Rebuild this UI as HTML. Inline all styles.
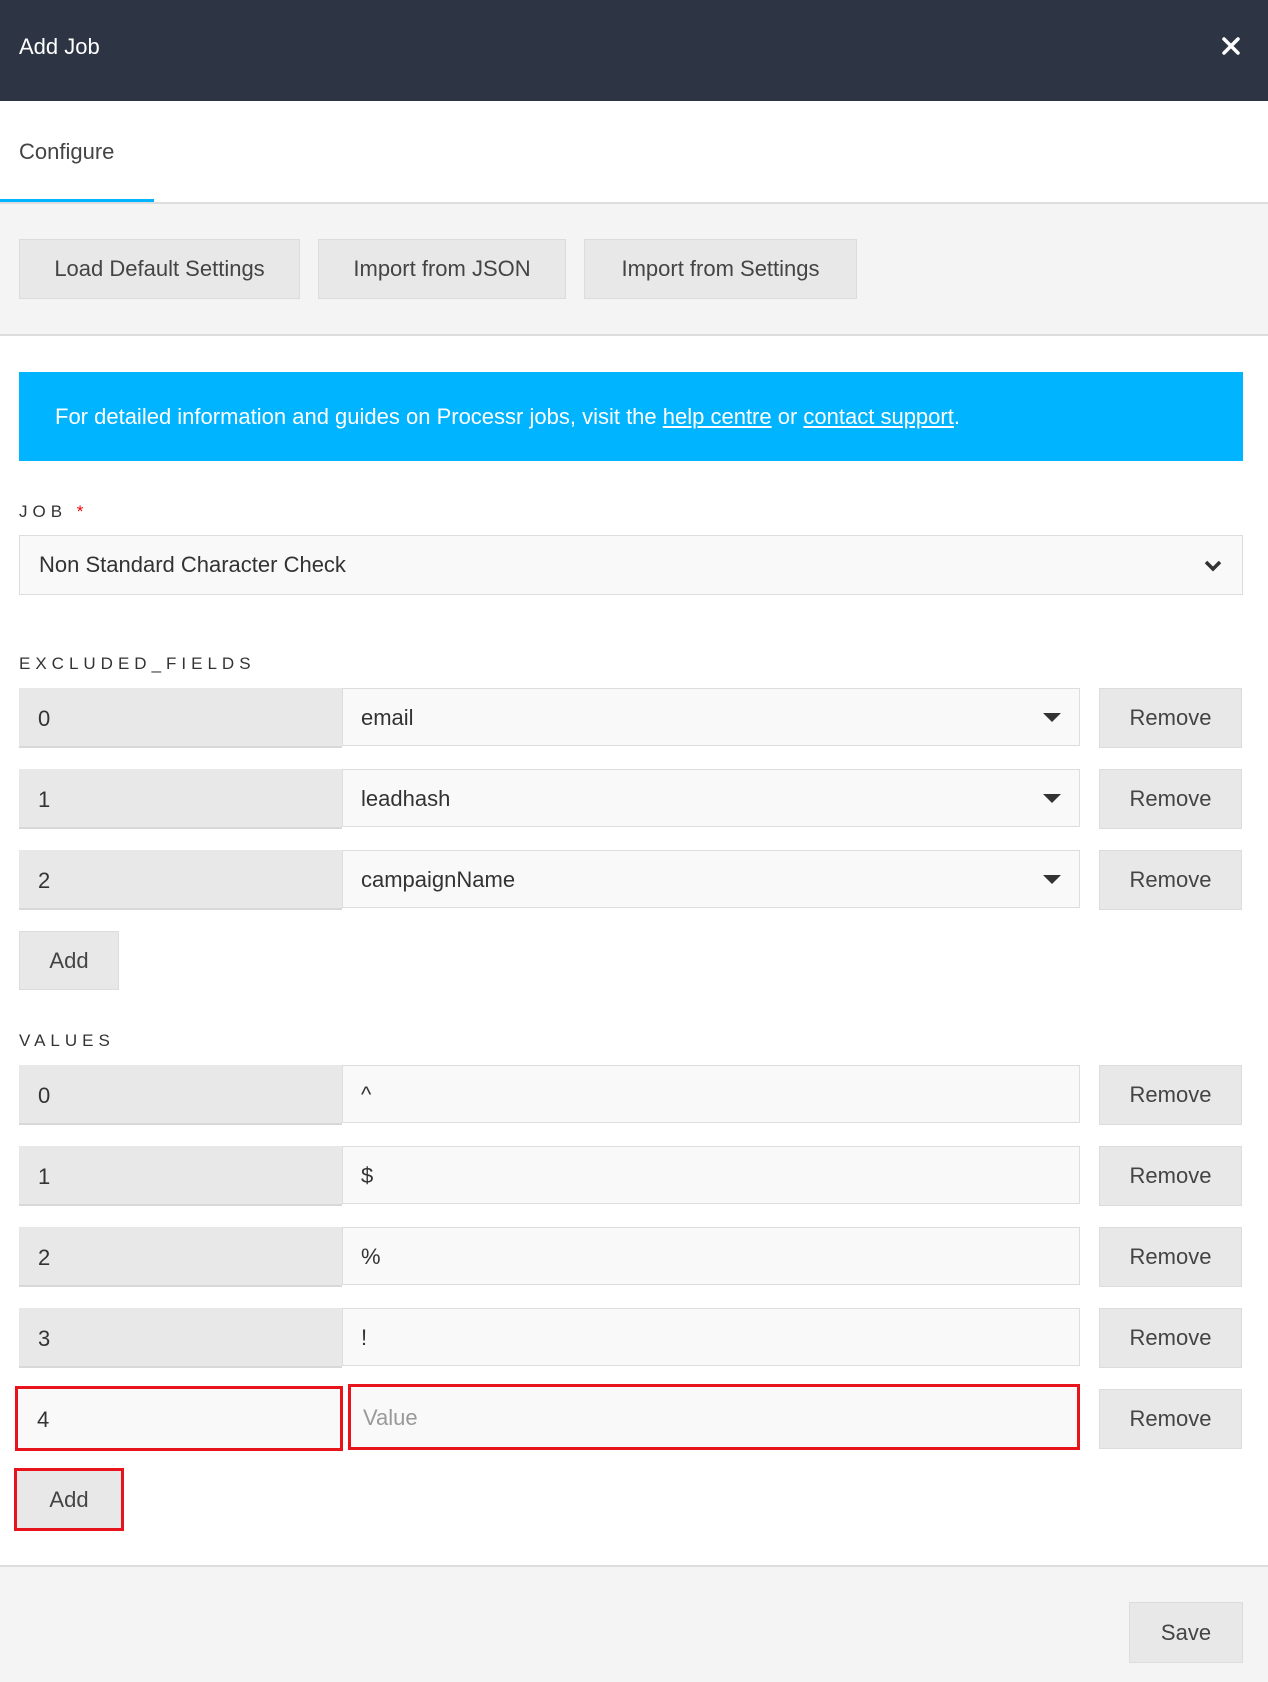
<!DOCTYPE html>
<html><head><meta charset="utf-8"><style>
*{box-sizing:border-box;margin:0;padding:0}
body{width:1268px;height:1682px;overflow:hidden;background:#fff;font-family:"Liberation Sans",sans-serif;color:#333;position:relative}
.a{position:absolute}
.hdr{left:0;top:0;width:1268px;height:101px;background:#2d3544;color:#fff}
.btn{background:#e8e8e8;border:1px solid #dcdcdc;color:#444;font-size:22px;display:flex;align-items:center;justify-content:center}
.lbl{font-size:17px;letter-spacing:5px;color:#333}
.idx{left:19px;width:323px;height:60px;background:#e8e8e8;border-bottom:2px solid #d8d8d8;font-size:22px;padding-left:19px;padding-top:3px;display:flex;align-items:center}
.fld{left:342px;width:738px;height:58px;background:#f9f9f9;border:1px solid #ddd;font-size:22px;padding-left:18px;padding-top:2px;display:flex;align-items:center}
.rm{left:1099px;width:143px;height:60px}
.car{right:18px;top:24px;width:0;height:0;border-left:9px solid transparent;border-right:9px solid transparent;border-top:9px solid #333}
</style></head><body>
<div class="a hdr"><div class="a" style="left:19px;top:34px;font-size:22px">Add Job</div>
<svg class="a" style="left:1221px;top:36px" width="20" height="20" viewBox="0 0 20 20"><path d="M3 3L17 17M17 3L3 17" stroke="#fff" stroke-width="3.5" stroke-linecap="round"/></svg></div>
<div class="a" style="left:19px;top:139px;font-size:22px;color:#444">Configure</div>
<div class="a" style="left:0;top:199px;width:154px;height:4px;background:#00b4ff"></div>
<div class="a" style="left:0;top:202px;width:1268px;height:134px;background:#f4f4f4;border-top:2px solid #ddd;border-bottom:2px solid #ddd"></div>
<div class="a btn" style="left:19px;top:239px;width:281px;height:60px">Load Default Settings</div>
<div class="a btn" style="left:318px;top:239px;width:248px;height:60px">Import from JSON</div>
<div class="a btn" style="left:584px;top:239px;width:273px;height:60px">Import from Settings</div>
<div class="a" style="left:19px;top:372px;width:1224px;height:89px;background:#00b4ff;color:#fff;font-size:22px;padding:32px 0 0 36px">For detailed information and guides on Processr jobs, visit the <u>help centre</u> or <u>contact support</u>.</div>
<div class="a lbl" style="left:19px;top:502px">JOB <span style="color:#e00">*</span></div>
<div class="a" style="left:19px;top:535px;width:1224px;height:60px;background:#f9f9f9;border:1px solid #ddd;font-size:22px;padding:16px 0 0 19px">Non Standard Character Check
<svg class="a" style="right:20px;top:24px" width="18" height="12" viewBox="0 0 18 12"><path d="M2 2L9 9L16 2" stroke="#333" stroke-width="3.5" fill="none"/></svg></div>
<div class="a lbl" style="left:19px;top:654px">EXCLUDED_FIELDS</div>

<div class="a idx" style="top:688px">0</div><div class="a fld" style="top:688px">email<div class="a car"></div></div><div class="a btn rm" style="top:688px">Remove</div>
<div class="a idx" style="top:769px">1</div><div class="a fld" style="top:769px">leadhash<div class="a car"></div></div><div class="a btn rm" style="top:769px">Remove</div>
<div class="a idx" style="top:850px">2</div><div class="a fld" style="top:850px">campaignName<div class="a car"></div></div><div class="a btn rm" style="top:850px">Remove</div>
<div class="a btn" style="left:19px;top:931px;width:100px;height:59px">Add</div>

<div class="a lbl" style="left:19px;top:1031px">VALUES</div>
<div class="a idx" style="top:1065px">0</div><div class="a fld" style="top:1065px">^</div><div class="a btn rm" style="top:1065px">Remove</div>
<div class="a idx" style="top:1146px">1</div><div class="a fld" style="top:1146px">$</div><div class="a btn rm" style="top:1146px">Remove</div>
<div class="a idx" style="top:1227px">2</div><div class="a fld" style="top:1227px">%</div><div class="a btn rm" style="top:1227px">Remove</div>
<div class="a idx" style="top:1308px">3</div><div class="a fld" style="top:1308px">!</div><div class="a btn rm" style="top:1308px">Remove</div>
<div class="a idx" style="top:1386px;left:15px;width:328px;height:65px;background:#f9f9f9;border:3px solid #e8141c">4</div>
<div class="a fld" style="top:1384px;left:348px;width:732px;height:66px;border:3px solid #e8141c;color:#999;padding-left:12px">Value</div>
<div class="a btn rm" style="top:1389px">Remove</div>
<div class="a btn" style="left:14px;top:1468px;width:110px;height:63px;border:3px solid #e8141c">Add</div>

<div class="a" style="left:0;top:1565px;width:1268px;height:117px;background:#f4f4f4;border-top:2px solid #ddd"></div>
<div class="a btn" style="left:1129px;top:1602px;width:114px;height:61px">Save</div>
</body></html>
